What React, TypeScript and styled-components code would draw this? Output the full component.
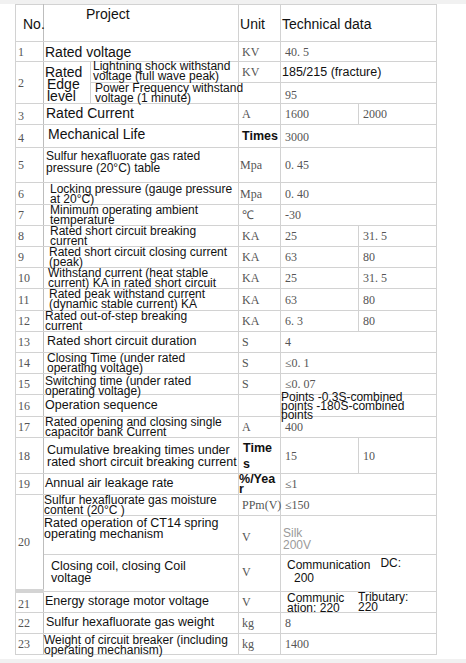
import React, { createContext, useContext } from 'react';
import styled, { createGlobalStyle } from 'styled-components';

const Global = createGlobalStyle`
  html, body { margin: 0; padding: 0; background: #ffffff; }
  body {
    width: 466px;
    height: 663px;
    overflow: hidden;
    font-family: "Liberation Sans", Arial, sans-serif;
    color: #111;
  }
`;

const Page = styled.div`
  display: flex;
  flex-direction: column;
  height: 663px;
  background: #fff;
`;

const Band = styled.div`
  height: 4px;
  background: #f1f1f1;
  flex: none;
`;

const Sheet = styled.div`
  flex: 1;
  padding: 0 0 0 15px;
`;

const Grid = styled.table`
  border-collapse: collapse;
  table-layout: fixed;
  width: 421px;
`;

const Row = styled.tr<{ $h: number }>`
  height: ${(p) => p.$h}px;
`;

const Cell = styled.td<{ $pl?: number; $bb?: number; $dark?: boolean }>`
  border: 1px solid #d2d2d2;
  ${(p) => (p.$dark ? 'border-right-color: #bdbdbd;' : '')}
  ${(p) => (p.$bb ? `border-bottom: ${p.$bb}px solid #d4d4d4;` : '')}
  padding: 0 0 0 ${(p) => p.$pl ?? 2}px;
  vertical-align: top;
  white-space: nowrap;
  overflow: visible;
`;

const Box = styled.div<{ $h: number; $pt: number; $pb: number; $v: string }>`
  height: ${(p) => p.$h}px;
  box-sizing: border-box;
  padding: ${(p) => p.$pt}px 0 ${(p) => p.$pb}px 0;
  display: flex;
  flex-direction: column;
  justify-content: ${(p) => p.$v};
  overflow: visible;
`;

const RowH = createContext(20);

const Line = ({ h, children }: { h: number; children: React.ReactNode }) => (
  <RowH.Provider value={h}>
    <Row $h={h}>{children}</Row>
  </RowH.Provider>
);

const Fit = ({
  h,
  v = 'center',
  pt = 0,
  pb = 0,
  children,
}: {
  h?: number;
  v?: 'center' | 'flex-start' | 'flex-end';
  pt?: number;
  pb?: number;
  children?: React.ReactNode;
}) => {
  const rh = useContext(RowH);
  return (
    <Box $h={(h ?? rh) - 1} $pt={pt} $pb={pb} $v={v}>
      {children}
    </Box>
  );
};

const Head = styled.span`
  display: block;
  font-size: 14px;
  line-height: 16px;
  color: #111;
`;

const Title = styled.span<{ $size?: number; $lh?: number }>`
  display: block;
  font-size: ${(p) => p.$size ?? 14}px;
  line-height: ${(p) => p.$lh ?? 16}px;
  color: #111;
`;

const Desc = styled.span<{ $size?: number; $lh?: number }>`
  display: block;
  font-size: ${(p) => p.$size ?? 12}px;
  line-height: ${(p) => p.$lh ?? 10}px;
  color: #111;
`;

const Serif = styled.span<{ $size?: number }>`
  display: block;
  font-family: "Liberation Serif", "Times New Roman", serif;
  font-size: ${(p) => p.$size ?? 12}px;
  line-height: 14px;
  color: #555;
`;

const UnitBold = styled.span<{ $lh?: number }>`
  display: block;
  font-size: 12.5px;
  font-weight: bold;
  line-height: ${(p) => p.$lh ?? 14}px;
  color: #111;
`;

const Faint = styled.span`
  display: block;
  font-size: 12px;
  line-height: 12px;
  color: #9a9a9a;
`;

const Split = styled.div<{ $gap?: number }>`
  display: flex;
  align-items: flex-start;
  gap: ${(p) => p.$gap ?? 0}px;
`;

const SplitPart = styled.span<{ $w?: number; $shift?: number }>`
  display: block;
  ${(p) => (p.$w ? `width: ${p.$w}px;` : '')}
  font-size: 12px;
  line-height: 10px;
  color: #111;
  margin-top: ${(p) => p.$shift ?? 0}px;
`;

const Indent = styled.span<{ $pl: number }>`
  display: block;
  padding-left: ${(p) => p.$pl}px;
`;

const Num = ({ n, h, pt, pb }: { n: string; h?: number; pt?: number; pb?: number }) => (
  <Fit h={h} pt={pt} pb={pb}>
    <Serif>{n}</Serif>
  </Fit>
);

const Val = ({ t, pt, pb }: { t: string; pt?: number; pb?: number }) => (
  <Fit pt={pt} pb={pb}>
    <Serif>{t}</Serif>
  </Fit>
);

export default function App() {
  return (
    <Page>
      <Global />
      <Band />
      <Sheet>
        <Grid>
          <colgroup>
            <col style={{ width: 28 }} />
            <col style={{ width: 47 }} />
            <col style={{ width: 148 }} />
            <col style={{ width: 42 }} />
            <col style={{ width: 78 }} />
            <col style={{ width: 78 }} />
          </colgroup>
          <tbody>
            <Line h={37}>
              <Cell $pl={7} $dark>
                <Fit pt={2}><Head>No.</Head></Fit>
              </Cell>
              <Cell colSpan={2} $pl={42}>
                <Fit v="flex-start" pt={1}><Head>Project</Head></Fit>
              </Cell>
              <Cell $pl={1}>
                <Fit pt={2}><Head>Unit</Head></Fit>
              </Cell>
              <Cell colSpan={2} $pl={1}>
                <Fit pt={2}><Head>Technical data</Head></Fit>
              </Cell>
            </Line>

            <Line h={20}>
              <Cell $dark><Num n="1" /></Cell>
              <Cell colSpan={2} $pl={1}><Fit><Title>Rated voltage</Title></Fit></Cell>
              <Cell $pl={3}><Val t="KV" /></Cell>
              <Cell colSpan={2} $pl={4}><Val t="40. 5" /></Cell>
            </Line>

            <Line h={21}>
              <Cell rowSpan={2} $dark><Num n="2" h={42} /></Cell>
              <Cell rowSpan={2} $pl={1}>
                <Fit h={42} pt={2}>
                  <Title $size={14} $lh={12}>
                    Rated
                    <Indent $pl={2}>Edge</Indent>
                    <Indent $pl={2}>level</Indent>
                  </Title>
                </Fit>
              </Cell>
              <Cell $pl={2}>
                <Fit pb={2}>
                  <Desc>
                    Lightning shock withstand
                    <br />
                    voltage (full wave peak)
                  </Desc>
                </Fit>
              </Cell>
              <Cell $pl={3}><Val t="KV" /></Cell>
              <Cell colSpan={2} $pl={1}>
                <Fit pb={1}><Title $size={12.5}>185/215 (fracture)</Title></Fit>
              </Cell>
            </Line>
            <Line h={21}>
              <Cell $pl={4}>
                <Fit>
                  <Desc>
                    Power Frequency withstand
                    <br />
                    voltage (1 minute)
                  </Desc>
                </Fit>
              </Cell>
              <Cell />
              <Cell colSpan={2} $pl={4}><Val t="95" pt={3} /></Cell>
            </Line>

            <Line h={21}>
              <Cell $dark><Num n="3" pt={3} /></Cell>
              <Cell colSpan={2} $pl={2}><Fit pb={3}><Title>Rated Current</Title></Fit></Cell>
              <Cell $pl={3}><Val t="A" /></Cell>
              <Cell $pl={4}><Val t="1600" /></Cell>
              <Cell $pl={4}><Val t="2000" /></Cell>
            </Line>

            <Line h={23}>
              <Cell $dark><Num n="4" pt={4} /></Cell>
              <Cell colSpan={2} $pl={4}><Fit pb={4}><Title>Mechanical Life</Title></Fit></Cell>
              <Cell $pl={3}><Fit><UnitBold>Times</UnitBold></Fit></Cell>
              <Cell colSpan={2} $pl={4}><Val t="3000" pt={2} /></Cell>
            </Line>

            <Line h={35}>
              <Cell $dark><Num n="5" /></Cell>
              <Cell colSpan={2} $pl={2}>
                <Fit pb={6}>
                  <Desc $lh={12}>
                    Sulfur hexafluorate gas rated
                    <br />
                    pressure (20°C) table
                  </Desc>
                </Fit>
              </Cell>
              <Cell $pl={1}><Val t="Mpa" /></Cell>
              <Cell colSpan={2} $pl={4}><Val t="0. 45" /></Cell>
            </Line>

            <Line h={22}>
              <Cell $dark><Num n="6" /></Cell>
              <Cell colSpan={2} $pl={6}>
                <Fit>
                  <Desc>
                    Locking pressure (gauge pressure
                    <br />
                    at 20°C)
                  </Desc>
                </Fit>
              </Cell>
              <Cell $pl={1}><Val t="Mpa" /></Cell>
              <Cell colSpan={2} $pl={4}><Val t="0. 40" /></Cell>
            </Line>

            <Line h={21}>
              <Cell $dark><Num n="7" /></Cell>
              <Cell colSpan={2} $pl={6}>
                <Fit>
                  <Desc>
                    Minimum operating ambient
                    <br />
                    temperature
                  </Desc>
                </Fit>
              </Cell>
              <Cell $pl={3}><Val t="℃" /></Cell>
              <Cell colSpan={2} $pl={4}><Val t="-30" /></Cell>
            </Line>

            <Line h={21}>
              <Cell $dark><Num n="8" /></Cell>
              <Cell colSpan={2} $pl={6}>
                <Fit>
                  <Desc>
                    Rated short circuit breaking
                    <br />
                    current
                  </Desc>
                </Fit>
              </Cell>
              <Cell $pl={3}><Val t="KA" /></Cell>
              <Cell $pl={4}><Val t="25" /></Cell>
              <Cell $pl={4}><Val t="31. 5" /></Cell>
            </Line>

            <Line h={21}>
              <Cell $dark><Num n="9" /></Cell>
              <Cell colSpan={2} $pl={5}>
                <Fit>
                  <Desc>
                    Rated short circuit closing current
                    <br />
                    (peak)
                  </Desc>
                </Fit>
              </Cell>
              <Cell $pl={3}><Val t="KA" /></Cell>
              <Cell $pl={4}><Val t="63" /></Cell>
              <Cell $pl={4}><Val t="80" /></Cell>
            </Line>

            <Line h={21}>
              <Cell $dark><Num n="10" /></Cell>
              <Cell colSpan={2} $pl={4}>
                <Fit>
                  <Desc>
                    Withstand current (heat stable
                    <br />
                    current) KA in rated short circuit
                  </Desc>
                </Fit>
              </Cell>
              <Cell $pl={3}><Val t="KA" /></Cell>
              <Cell $pl={4}><Val t="25" /></Cell>
              <Cell $pl={4}><Val t="31. 5" /></Cell>
            </Line>

            <Line h={22}>
              <Cell $dark><Num n="11" /></Cell>
              <Cell colSpan={2} $pl={5}>
                <Fit pb={2}>
                  <Desc>
                    Rated peak withstand current
                    <br />
                    (dynamic stable current) KA
                  </Desc>
                </Fit>
              </Cell>
              <Cell $pl={3}><Val t="KA" /></Cell>
              <Cell $pl={4}><Val t="63" /></Cell>
              <Cell $pl={4}><Val t="80" /></Cell>
            </Line>

            <Line h={21}>
              <Cell $dark><Num n="12" /></Cell>
              <Cell colSpan={2} $pl={1}>
                <Fit>
                  <Desc>
                    Rated out-of-step breaking
                    <br />
                    current
                  </Desc>
                </Fit>
              </Cell>
              <Cell $pl={3}><Val t="KA" /></Cell>
              <Cell $pl={4}><Val t="6. 3" /></Cell>
              <Cell $pl={4}><Val t="80" /></Cell>
            </Line>

            <Line h={21}>
              <Cell $dark><Num n="13" /></Cell>
              <Cell colSpan={2} $pl={3}>
                <Fit pb={3}><Title $size={12.5} $lh={14}>Rated short circuit duration</Title></Fit>
              </Cell>
              <Cell $pl={3}><Val t="S" /></Cell>
              <Cell colSpan={2} $pl={4}><Val t="4" /></Cell>
            </Line>

            <Line h={21}>
              <Cell $dark><Num n="14" /></Cell>
              <Cell colSpan={2} $pl={3}>
                <Fit>
                  <Desc>
                    Closing Time (under rated
                    <br />
                    operating voltage)
                  </Desc>
                </Fit>
              </Cell>
              <Cell $pl={3}><Val t="S" /></Cell>
              <Cell colSpan={2} $pl={4}><Val t="≤0. 1" /></Cell>
            </Line>

            <Line h={21}>
              <Cell $dark><Num n="15" /></Cell>
              <Cell colSpan={2} $pl={1}>
                <Fit pt={4}>
                  <Desc>
                    Switching time (under rated
                    <br />
                    operating voltage)
                  </Desc>
                </Fit>
              </Cell>
              <Cell $pl={3}><Val t="S" /></Cell>
              <Cell colSpan={2} $pl={4}><Val t="≤0. 07" /></Cell>
            </Line>

            <Line h={22}>
              <Cell $dark><Num n="16" /></Cell>
              <Cell colSpan={2} $pl={1}>
                <Fit pb={2}><Title $size={12.5} $lh={14}>Operation sequence</Title></Fit>
              </Cell>
              <Cell />
              <Cell colSpan={2} $pl={0}>
                <Fit pt={2}>
                  <Desc $lh={9}>
                    Points -0.3S-combined
                    <br />
                    points -180S-combined
                    <br />
                    points
                  </Desc>
                </Fit>
              </Cell>
            </Line>

            <Line h={21}>
              <Cell $dark><Num n="17" /></Cell>
              <Cell colSpan={2} $pl={1}>
                <Fit>
                  <Desc>
                    Rated opening and closing single
                    <br />
                    capacitor bank Current
                  </Desc>
                </Fit>
              </Cell>
              <Cell $pl={3}><Val t="A" /></Cell>
              <Cell colSpan={2} $pl={4}><Val t="400" /></Cell>
            </Line>

            <Line h={36}>
              <Cell $dark><Num n="18" /></Cell>
              <Cell colSpan={2} $pl={3}>
                <Fit>
                  <Desc $size={12.5} $lh={12}>
                    Cumulative breaking times under
                    <br />
                    rated short circuit breaking current
                  </Desc>
                </Fit>
              </Cell>
              <Cell $pl={4}>
                <Fit><UnitBold $lh={16}>Time<br />s</UnitBold></Fit>
              </Cell>
              <Cell $pl={4}><Val t="15" /></Cell>
              <Cell $pl={4}><Val t="10" /></Cell>
            </Line>

            <Line h={21}>
              <Cell $dark><Num n="19" /></Cell>
              <Cell colSpan={2} $pl={1}>
                <Fit pb={2}><Title $size={12.5} $lh={14}>Annual air leakage rate</Title></Fit>
              </Cell>
              <Cell $pl={0}>
                <Fit><UnitBold $lh={10}>%/Yea<br />r</UnitBold></Fit>
              </Cell>
              <Cell colSpan={2} $pl={4}><Val t="≤1" /></Cell>
            </Line>

            <Line h={21}>
              <Cell rowSpan={3} $bb={4} $dark><Num n="20" h={95} /></Cell>
              <Cell colSpan={2} $pl={0}>
                <Fit>
                  <Desc>
                    Sulfur hexafluorate gas moisture
                    <br />
                    content (20°C )
                  </Desc>
                </Fit>
              </Cell>
              <Cell $pl={3}><Val t="PPm(V)" /></Cell>
              <Cell colSpan={2} $pl={4}><Val t="≤150" /></Cell>
            </Line>

            <Line h={38}>
              <Cell colSpan={2} $pl={0}>
                <Fit v="flex-start" pt={2}>
                  <Desc $size={12.5} $lh={11}>
                    Rated operation of CT14 spring
                    <br />
                    operating mechanism
                  </Desc>
                </Fit>
              </Cell>
              <Cell $pl={3}><Val t="V" pt={4} /></Cell>
              <Cell colSpan={2} $pl={2}>
                <Fit v="flex-end" pb={2}>
                  <Faint>
                    Silk
                    <br />
                    200V
                  </Faint>
                </Fit>
              </Cell>
            </Line>

            <Line h={36}>
              <Cell colSpan={2} $pl={7}>
                <Fit>
                  <Desc $size={12.5} $lh={12}>
                    Closing coil, closing Coil
                    <br />
                    voltage
                  </Desc>
                </Fit>
              </Cell>
              <Cell $pl={3}><Val t="V" /></Cell>
              <Cell colSpan={2} $pl={6}>
                <Fit pb={2}>
                  <Split $gap={10}>
                    <SplitPart>Communication</SplitPart>
                    <SplitPart $shift={-2}>DC:</SplitPart>
                  </Split>
                  <Indent $pl={7}>
                    <SplitPart $shift={3}>200</SplitPart>
                  </Indent>
                </Fit>
              </Cell>
            </Line>

            <Line h={20}>
              <Cell $dark><Num n="21" pt={2} /></Cell>
              <Cell colSpan={2} $pl={1}>
                <Fit><Title $size={12.5} $lh={14}>Energy storage motor voltage</Title></Fit>
              </Cell>
              <Cell $pl={3}><Val t="V" pt={2} /></Cell>
              <Cell colSpan={2} $pl={6}>
                <Fit pt={4}>
                  <Split>
                    <SplitPart $w={71}>
                      Communic
                      <br />
                      ation: 220
                    </SplitPart>
                    <SplitPart $shift={-1}>
                      Tributary:
                      <br />
                      220
                    </SplitPart>
                  </Split>
                </Fit>
              </Cell>
            </Line>

            <Line h={21}>
              <Cell $dark><Num n="22" /></Cell>
              <Cell colSpan={2} $pl={2}>
                <Fit pb={3}><Title $size={12.5} $lh={14}>Sulfur hexafluorate gas weight</Title></Fit>
              </Cell>
              <Cell $pl={3}><Val t="kg" /></Cell>
              <Cell colSpan={2} $pl={4}><Val t="8" /></Cell>
            </Line>

            <Line h={21}>
              <Cell $dark><Num n="23" /></Cell>
              <Cell colSpan={2} $pl={0}>
                <Fit pt={2}>
                  <Desc>
                    Weight of circuit breaker (including
                    <br />
                    operating mechanism)
                  </Desc>
                </Fit>
              </Cell>
              <Cell $pl={3}><Val t="kg" /></Cell>
              <Cell colSpan={2} $pl={4}><Val t="1400" /></Cell>
            </Line>
          </tbody>
        </Grid>
      </Sheet>
      <Band />
    </Page>
  );
}
